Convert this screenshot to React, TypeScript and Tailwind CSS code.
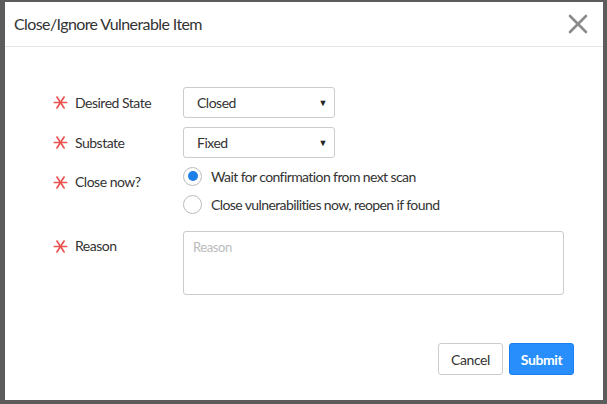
import React from 'react';

const Star = () => (
  <svg width="15" height="15" viewBox="0 0 16 16" className="shrink-0">
    <g stroke="#e8534f" strokeWidth="1.8" strokeLinecap="round">
      <line x1="1.5" y1="8" x2="14.5" y2="8" />
      <line x1="4.2" y1="2.2" x2="11.8" y2="13.8" />
      <line x1="11.8" y1="2.2" x2="4.2" y2="13.8" />
    </g>
  </svg>
);

const Label = ({ text, className = '' }: { text: string; className?: string }) => (
  <div className={`flex w-[178px] shrink-0 items-center gap-[7px] pl-[48px] ${className}`}>
    <Star />
    <span className="text-[14px] leading-[20px] tracking-[-0.5px] text-[#333]">{text}</span>
  </div>
);

const FakeSelect = ({ value }: { value: string }) => (
  <div className="flex h-[31px] w-[152px] items-center justify-between rounded-[3px] border border-[#ccc] pl-[13px] pr-[7px] text-[14px] tracking-[-0.5px] text-[#333]">
    <span>{value}</span>
    <span className="text-[9px] text-[#222]">▼</span>
  </div>
);

const Radio = ({ checked, text }: { checked?: boolean; text: string }) => (
  <div className="flex h-[20px] items-center gap-[9px]">
    <span className="flex h-[19px] w-[19px] items-center justify-center rounded-full border border-[#bbb] bg-white">
      {checked && <span className="h-[10px] w-[10px] rounded-full bg-[#1f7fe8]" />}
    </span>
    <span className="text-[14px] tracking-[-0.6px] text-[#333]">{text}</span>
  </div>
);

export default function App() {
  return (
    <div
      className="h-[404px] w-[607px] bg-[#5c5c5c] pb-[4px] pl-[5px] pr-[4px] pt-[2px]"
      style={{ fontFamily: 'Lato, "Liberation Sans", sans-serif' }}
    >
      <div className="flex h-full flex-col bg-white">
        {/* Header */}
        <div className="flex h-[45px] shrink-0 items-center justify-between border-b border-[#e5e5e5] pl-[9px] pr-[14px]">
          <h1 className="text-[16px] tracking-[-0.6px] text-[#333]">Close/Ignore Vulnerable Item</h1>
          <svg width="22" height="22" viewBox="0 0 22 22">
            <g stroke="#8a8a8a" strokeWidth="2.6" strokeLinecap="round">
              <line x1="3" y1="3" x2="19" y2="19" />
              <line x1="19" y1="3" x2="3" y2="19" />
            </g>
          </svg>
        </div>

        {/* Form */}
        <div className="flex flex-col pt-[40px]">
          <div className="flex h-[31px] items-center">
            <Label text="Desired State" />
            <FakeSelect value="Closed" />
          </div>
          <div className="mt-[9px] flex h-[31px] items-center">
            <Label text="Substate" />
            <FakeSelect value="Fixed" />
          </div>
          <div className="mt-[8px] flex items-start">
            <Label text="Close now?" className="pt-[6px]" />
            <div className="flex flex-col gap-[8px]">
              <Radio checked text="Wait for confirmation from next scan" />
              <Radio text="Close vulnerabilities now, reopen if found" />
            </div>
          </div>
          <div className="mt-[17px] flex items-start">
            <Label text="Reason" className="pt-[5px]" />
            <div className="h-[64px] w-[381px] rounded-[3px] border border-[#ccc] px-[9px] pt-[6px] text-[13px] tracking-[-0.4px] text-[#bbb]">
              Reason
            </div>
          </div>
        </div>

        {/* Footer */}
        <div className="mt-[48px] flex justify-end gap-[6px] pr-[29px]">
          <button className="h-[32px] w-[65px] rounded-[3px] border border-[#ccc] bg-white text-[14px] tracking-[-0.4px] text-[#333]">
            Cancel
          </button>
          <button className="h-[32px] w-[65px] rounded-[3px] border border-[#1b7ef0] bg-[#278efc] text-[14px] font-bold tracking-[-0.4px] text-white">
            Submit
          </button>
        </div>
      </div>
    </div>
  );
}
